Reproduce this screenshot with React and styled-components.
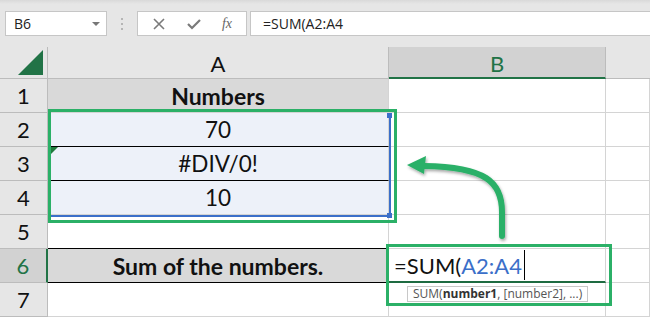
import React from "react";
import styled, { createGlobalStyle } from "styled-components";

const GREEN = "#2bb067";
const XL_GREEN = "#217346";
const BLUE = "#3b6fc9";
const GRID = "#d4d4d4";
const HEAD_LINE = "#bcbcbc";

const GlobalStyle = createGlobalStyle`
  html, body {
    margin: 0;
    padding: 0;
    background: #ffffff;
    overflow: hidden;
  }
`;

const Page = styled.div`
  position: relative;
  width: 650px;
  height: 323px;
  overflow: hidden;
  font-family: "Lato", "Noto Sans", sans-serif;
`;

const Toolbar = styled.div`
  height: 47px;
  box-sizing: border-box;
  padding: 11px 0 0 5px;
  display: flex;
  align-items: flex-start;
  background: linear-gradient(#d9d9d9 0px, #e6e6e6 4px, #e6e6e6 100%);
  font-family: "Open Sans", "Noto Sans", sans-serif;
  font-size: 14px;
  color: #222;
`;

const NameBox = styled.div`
  width: 102px;
  height: 25px;
  box-sizing: border-box;
  background: #fff;
  border: 1px solid #c6c6c6;
  display: flex;
  align-items: center;
  justify-content: space-between;
  padding: 0 6px 0 8px;
`;

const Caret = styled.span`
  width: 0;
  height: 0;
  border-left: 4px solid transparent;
  border-right: 4px solid transparent;
  border-top: 4px solid #777;
`;

const Grip = styled.div`
  width: 30px;
  height: 25px;
  display: flex;
  flex-direction: column;
  align-items: center;
  justify-content: center;
  gap: 3px;
  span {
    width: 2px;
    height: 2px;
    background: #b5b5b5;
  }
`;

const FxBox = styled.div`
  width: 110px;
  height: 25px;
  box-sizing: border-box;
  background: #fff;
  border: 1px solid #c6c6c6;
  display: flex;
  align-items: center;
  justify-content: space-around;
  padding: 0 4px;
  color: #7a7a7a;
`;

const FxLabel = styled.span`
  font-family: "Liberation Serif", serif;
  font-style: italic;
  font-size: 14px;
  color: #666;
`;

const FormulaInput = styled.div`
  flex: 1;
  margin-left: 3px;
  height: 25px;
  box-sizing: border-box;
  background: #fff;
  border: 1px solid #c6c6c6;
  border-right: none;
  display: flex;
  align-items: center;
  padding-left: 12px;
`;

const Sheet = styled.div`
  display: grid;
  grid-template-columns: 48px 341px 217px 1fr;
  grid-template-rows: 32px repeat(7, 34px);
`;

const Corner = styled.div`
  background: #e6e6e6;
  border-right: 1px solid ${HEAD_LINE};
  border-bottom: 1px solid ${HEAD_LINE};
  display: flex;
  align-items: flex-end;
  justify-content: flex-end;
  padding: 0 4px 3px 0;
`;

const ColHead = styled.div`
  background: ${(p) => (p.$active ? "#d2d2d2" : "#e6e6e6")};
  color: ${(p) => (p.$active ? XL_GREEN : "#111")};
  border-right: 1px solid ${HEAD_LINE};
  border-bottom: ${(p) => (p.$active ? `2px solid ${XL_GREEN}` : `1px solid ${HEAD_LINE}`)};
  display: flex;
  align-items: center;
  justify-content: center;
  font-size: 22px;
  padding-top: 2px;
`;

const ColHeadRest = styled.div`
  background: #e6e6e6;
  border-bottom: 1px solid ${HEAD_LINE};
`;

const RowHead = styled.div`
  background: ${(p) => (p.$active ? "#d2d2d2" : "#e6e6e6")};
  color: ${(p) => (p.$active ? XL_GREEN : "#111")};
  border-right: ${(p) => (p.$active ? `2px solid ${XL_GREEN}` : `1px solid ${HEAD_LINE}`)};
  border-bottom: 1px solid ${HEAD_LINE};
  display: flex;
  align-items: center;
  justify-content: center;
  font-size: 22px;
`;

const Cell = styled.div`
  position: relative;
  background: ${(p) => p.$bg || "#fff"};
  border-right: 1px solid ${(p) => p.$rightColor || GRID};
  border-bottom: 1px solid ${(p) => p.$bottomColor || GRID};
  display: flex;
  align-items: center;
  justify-content: center;
  font-size: ${(p) => (p.$bold ? "23px" : "22.5px")};
  font-weight: ${(p) => (p.$bold ? 700 : 400)};
  color: #111;
  white-space: nowrap;
`;

const ErrorFlag = styled.span`
  position: absolute;
  left: 3px;
  top: 0;
  width: 0;
  height: 0;
  border-top: 7px solid #1f7a3c;
  border-right: 7px solid transparent;
`;

const EditCell = styled.div`
  position: relative;
  background: #fff;
  border-right: 1px solid ${GRID};
  border-bottom: 2px solid #1e6b41;
  display: flex;
  align-items: center;
  padding-left: 5px;
  font-size: 22px;
  color: #111;
`;

const RefText = styled.span`
  color: ${BLUE};
`;

const TextCursor = styled.span`
  width: 1px;
  height: 30px;
  background: #000;
  margin-left: 2px;
`;

const RangeHighlight = styled.div`
  position: absolute;
  left: 48px;
  top: 109px;
  width: 349px;
  height: 114px;
  box-sizing: border-box;
  border: 3px solid ${GREEN};
  pointer-events: none;
`;

const RangeBorder = styled.div`
  position: absolute;
  left: 48px;
  top: 113px;
  width: 343px;
  height: 104px;
  box-sizing: border-box;
  border-right: 2px solid ${BLUE};
  border-bottom: 2px solid ${BLUE};
`;

const Handle = styled.span`
  position: absolute;
  width: 5px;
  height: 5px;
  background: ${BLUE};
  right: -3px;
  ${(p) => (p.$bottom ? "bottom: -3px;" : "top: 0;")}
`;

const FormulaHighlight = styled.div`
  position: absolute;
  left: 386px;
  top: 244px;
  width: 226px;
  height: 62px;
  box-sizing: border-box;
  border: 3px solid ${GREEN};
`;

const Tooltip = styled.div`
  position: absolute;
  left: 407px;
  top: 286px;
  height: 16px;
  box-sizing: border-box;
  padding: 0 5px;
  background: #fff;
  border: 1px solid #c8c8c8;
  font-family: "Open Sans", "Noto Sans", sans-serif;
  font-size: 12px;
  line-height: 14px;
  color: #555;
  b {
    color: #333;
  }
`;

const ArrowLayer = styled.svg`
  position: absolute;
  left: 0;
  top: 0;
  pointer-events: none;
`;

export default function App() {
  return (
    <Page>
      <GlobalStyle />
      <Toolbar>
        <NameBox>
          B6
          <Caret />
        </NameBox>
        <Grip>
          <span />
          <span />
          <span />
        </Grip>
        <FxBox>
          <svg width="14" height="14" viewBox="0 0 14 14">
            <path d="M2 2 L12 12 M12 2 L2 12" stroke="#7a7a7a" strokeWidth="1.6" />
          </svg>
          <svg width="16" height="14" viewBox="0 0 16 14">
            <path d="M2 7 L6 11 L14 3" stroke="#7a7a7a" strokeWidth="2.2" fill="none" />
          </svg>
          <FxLabel>fx</FxLabel>
        </FxBox>
        <FormulaInput>=SUM(A2:A4</FormulaInput>
      </Toolbar>

      <Sheet>
        <Corner>
          <svg width="25" height="25" viewBox="0 0 25 25">
            <polygon points="25,0 25,25 0,25" fill={XL_GREEN} />
          </svg>
        </Corner>
        <ColHead>A</ColHead>
        <ColHead $active>B</ColHead>
        <ColHeadRest />

        <RowHead>1</RowHead>
        <Cell $bg="#d9d9d9" $bold>Numbers</Cell>
        <Cell />
        <Cell />

        <RowHead>2</RowHead>
        <Cell $bg="#edf1f9" $bottomColor="#000">70</Cell>
        <Cell />
        <Cell />

        <RowHead>3</RowHead>
        <Cell $bg="#edf1f9" $bottomColor="#000">
          <ErrorFlag />
          #DIV/0!
        </Cell>
        <Cell />
        <Cell />

        <RowHead>4</RowHead>
        <Cell $bg="#edf1f9">10</Cell>
        <Cell />
        <Cell />

        <RowHead>5</RowHead>
        <Cell $bottomColor="#000" />
        <Cell />
        <Cell />

        <RowHead $active>6</RowHead>
        <Cell $bg="#d9d9d9" $bold $bottomColor="#000">Sum of the numbers.</Cell>
        <EditCell>
          =SUM(<RefText>A2:A4</RefText>
          <TextCursor />
        </EditCell>
        <Cell />

        <RowHead>7</RowHead>
        <Cell />
        <Cell />
        <Cell />
      </Sheet>

      <RangeBorder>
        <Handle />
        <Handle $bottom />
      </RangeBorder>
      <RangeHighlight />
      <FormulaHighlight />
      <Tooltip>
        SUM(<b>number1</b>, [number2], ...)
      </Tooltip>

      <ArrowLayer width="650" height="323">
        <defs>
          <filter id="shadow" x="-20%" y="-20%" width="140%" height="140%">
            <feDropShadow dx="1" dy="2" stdDeviation="1.5" floodColor="#000" floodOpacity="0.35" />
          </filter>
        </defs>
        <g filter="url(#shadow)">
          <path
            d="M502 236 L502 212 C502 182 486 167 424 166"
            stroke={GREEN}
            strokeWidth="6"
            strokeLinecap="round"
            fill="none"
          />
          <polygon points="407,165 426,156 424,174" fill={GREEN} />
        </g>
      </ArrowLayer>
    </Page>
  );
}
